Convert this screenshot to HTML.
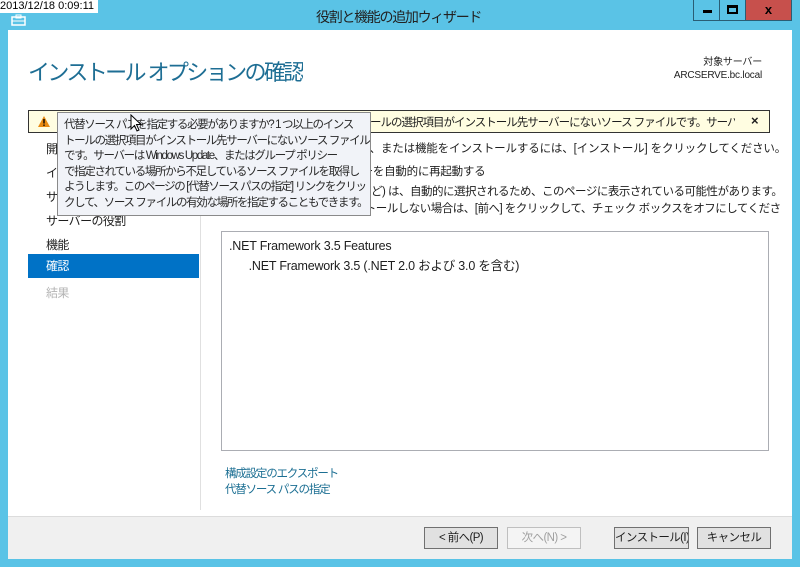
<!DOCTYPE html>
<html><head><meta charset="utf-8"><style>
*{margin:0;padding:0;box-sizing:border-box}
body{width:800px;height:567px;overflow:hidden;background:#5ac3e6;font-family:"Liberation Sans","Noto Sans CJK JP",sans-serif;font-size:11.5px;letter-spacing:-1.2px;color:#1e1e1e;position:relative}
.a{position:absolute;white-space:nowrap;overflow:hidden}
.c{letter-spacing:-0.25px}
.btn{position:absolute;top:527px;height:22px;border:1px solid #707070;background:#e1e1e1;text-align:center;line-height:20px;font-size:11.5px;letter-spacing:-0.6px;white-space:nowrap;overflow:hidden}
</style></head><body>
<div class="a" style="left:0;top:0;width:98px;height:13px;background:#fff;font-size:11px;line-height:13px;color:#000;letter-spacing:0">2013/12/18 0:09:11</div>
<svg class="a" style="left:11px;top:14px" width="16" height="12"><rect x="1" y="3" width="13" height="8" fill="none" stroke="#fff" stroke-width="1.5"/><rect x="5" y="1" width="5" height="3" fill="none" stroke="#fff"/><line x1="1" y1="7" x2="14" y2="7" stroke="#fff"/></svg>
<div class="a" style="left:316px;top:7px;font-size:14px;letter-spacing:-1.3px;color:#222">役割と機能の追加ウィザード</div>
<div class="a" style="left:693px;top:0;width:27px;height:21px;background:#5ac3e6;border:1px solid #2a5d74;border-top:none"><div class="a" style="left:9px;top:10px;width:9px;height:3px;background:#000"></div></div>
<div class="a" style="left:719px;top:0;width:27px;height:21px;border:1px solid #2a5d74;border-top:none"><div class="a" style="left:7px;top:5px;width:11px;height:9px;border:2px solid #000;border-top-width:3px"></div></div>
<div class="a" style="left:745px;top:0;width:47px;height:21px;background:#c7504c;border:1px solid #2a5d74;border-top:none;color:#000;font-weight:bold;font-size:13px;letter-spacing:0;text-align:center;line-height:19px">x</div>
<div class="a" style="left:8px;top:30px;width:784px;height:529px;background:#fff"></div>
<div class="a" style="left:8px;top:516px;width:784px;height:43px;background:#f0f0f0;border-top:1px solid #dcdcdc"></div>
<div class="a" style="left:28px;top:55px;font-size:22px;letter-spacing:-2.6px;color:#1e6e94">インストール オプションの確認</div>
<div class="a" style="left:600px;top:56px;width:162px;text-align:right;font-size:10px;letter-spacing:-0.2px;line-height:13px">対象サーバー<br>ARCSERVE.bc.local</div>
<div class="a" style="left:28px;top:110px;width:742px;height:23px;background:#fffde1;border:1px solid #333"></div>
<svg class="a" style="left:37px;top:115px" width="14" height="13"><path d="M7 1L13 12H1Z" fill="#e88a12"/><rect x="6.3" y="4" width="1.4" height="4.5" fill="#000"/><rect x="6.3" y="9.5" width="1.4" height="1.4" fill="#000"/></svg>
<div class="a" style="left:370px;top:114px;width:365px;letter-spacing:-1.0px">ールの選択項目がインストール先サーバーにないソース ファイルです。サーバ…</div>
<div class="a" style="left:751px;top:113px;font-weight:bold;font-size:13px;letter-spacing:0">×</div>
<div class="a" style="left:46px;top:137px;line-height:24px;font-size:12px;letter-spacing:-0.6px">開始する前に<br>インストールの種類<br>サーバーの選択<br>サーバーの役割<br>機能</div>
<div class="a" style="left:28px;top:254px;width:171px;height:24px;background:#0072c6;color:#fff;padding-left:18px;line-height:24px;font-size:12px;letter-spacing:-0.6px">確認</div>
<div class="a" style="left:46px;top:284px;color:#b4b4b4;font-size:12px;letter-spacing:-0.6px">結果</div>
<div class="a" style="left:200px;top:135px;width:1px;height:375px;background:#e0e0e0"></div>
<div class="a c" style="left:222px;top:140px;width:570px;letter-spacing:-0.15px">選択した役割、役割サービス、または機能をインストールするには、[インストール] をクリックしてください。</div>
<div class="a" style="left:222px;top:165px;width:11px;height:11px;border:1px solid #333"></div>
<div class="a c" style="left:238px;top:163px;width:300px">必要に応じて対象サーバーを自動的に再起動する</div>
<div class="a" style="left:222px;top:184px;line-height:17px;width:560px;letter-spacing:-0.5px">オプション機能 (管理ツールなど) は、自動的に選択されるため、このページに表示されている可能性があります。これ<br>らのオプション機能をインストールしない場合は、[前へ] をクリックして、チェック ボックスをオフにしてください。</div>
<div class="a" style="left:221px;top:231px;width:548px;height:220px;border:1px solid #abadb3"></div>
<div class="a" style="left:229px;top:236px;font-size:12.5px;letter-spacing:-0.2px;line-height:20px">.NET Framework 3.5 Features<br>&nbsp;&nbsp;&nbsp;&nbsp;&nbsp;&nbsp;.NET Framework 3.5 (.NET 2.0 および 3.0 を含む)</div>
<div class="a" style="left:225px;top:466px;color:#1c6f93;line-height:16px">構成設定のエクスポート<br>代替ソース パスの指定</div>
<div class="a" style="left:57px;top:112px;width:314px;height:104px;background:#f1f3f8;border:1px solid #8a8a8a;padding:5px 0 0 6px;line-height:15.5px;color:#2a2a2a;letter-spacing:-1.35px">代替ソース パスを指定する必要がありますか? 1 つ以上のインス<br>トールの選択項目がインストール先サーバーにないソース ファイル<br>です。サーバーは Windows Update、またはグループ ポリシー<br>で指定されている場所から不足しているソース ファイルを取得し<br>ようします。このページの [代替ソース パスの指定] リンクをクリッ<br>クして、ソース ファイルの有効な場所を指定することもできます。</div>
<svg class="a" style="left:130px;top:114px" width="12" height="18"><path d="M1 1V15L4.5 11.5L7 17L9 16L6.5 10.5H11Z" fill="#fff" stroke="#000"/></svg>
<div class="btn" style="left:424px;width:74px">&lt; 前へ(P)</div>
<div class="btn" style="left:507px;width:74px;border-color:#bfbfbf;background:#f4f4f4;color:#a0a0a0">次へ(N) &gt;</div>
<div class="btn" style="left:614px;width:75px">インストール(I)</div>
<div class="btn" style="left:697px;width:74px">キャンセル</div>
</body></html>
